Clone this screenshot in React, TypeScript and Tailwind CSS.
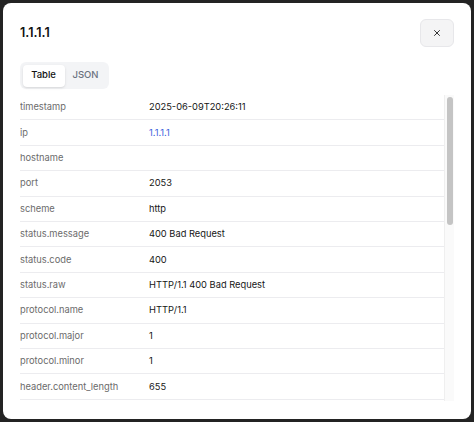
import { X } from "lucide-react";

const rows: { key: string; value: string; link?: boolean }[] = [
  { key: "timestamp", value: "2025-06-09T20:26:11" },
  { key: "ip", value: "1.1.1.1", link: true },
  { key: "hostname", value: "" },
  { key: "port", value: "2053" },
  { key: "scheme", value: "http" },
  { key: "status.message", value: "400 Bad Request" },
  { key: "status.code", value: "400" },
  { key: "status.raw", value: "HTTP/1.1 400 Bad Request" },
  { key: "protocol.name", value: "HTTP/1.1" },
  { key: "protocol.major", value: "1" },
  { key: "protocol.minor", value: "1" },
  { key: "header.content_length", value: "655" },
];

export default function App() {
  return (
    <div className="w-[474px] h-[422px] bg-[#232323] p-[3px] font-['Inter',sans-serif]">
      <div className="h-full bg-white rounded-lg px-[17px] pt-[16px] flex flex-col">
        <div className="flex items-center justify-between">
          <h2 className="text-[12.5px] font-semibold text-[#111]">1.1.1.1</h2>
          <button className="w-[34px] h-[28px] flex items-center justify-center rounded-md border border-[#e7e7ea] bg-[#f4f4f5] text-[#333]">
            <X size={10} strokeWidth={2.4} />
          </button>
        </div>

        <div className="mt-[15px] self-start flex items-center bg-[#f3f4f6] rounded-md p-[2.5px] h-[27px]">
          <div className="h-full w-[42px] flex items-center justify-center bg-white rounded text-[9.5px] font-medium text-[#111] shadow-sm">
            Table
          </div>
          <div className="h-full w-[42px] flex items-center justify-center text-[9.5px] font-medium text-[#6b7280]">
            JSON
          </div>
        </div>

        <div className="mt-[6px] flex h-[306px]">
          <div className="flex-1 overflow-hidden">
            {rows.map((r) => (
              <div
                key={r.key}
                className="h-[25.4px] flex items-center border-b border-[#ececef] text-[9.3px]"
              >
                <div className="w-[129px] shrink-0 text-[#6b6b6b]">{r.key}</div>
                <div className={r.link ? "text-[#3d63dd]" : "text-[#161616]"}>{r.value}</div>
              </div>
            ))}
          </div>
          <div className="w-[10px] shrink-0 bg-[#fafafa] border-l border-[#efefef] pt-[2px] px-[1.5px]">
            <div className="h-[128px] bg-[#c4c4c4] rounded-full" />
          </div>
        </div>
      </div>
    </div>
  );
}
